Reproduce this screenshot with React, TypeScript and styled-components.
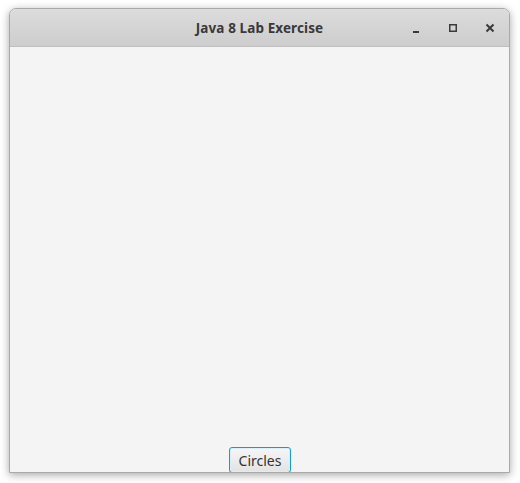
import React from 'react';
import styled, { createGlobalStyle } from 'styled-components';

const GlobalStyle = createGlobalStyle`
  html, body {
    margin: 0;
    padding: 0;
    background: #ffffff;
  }
  body {
    width: 520px;
    height: 483px;
    overflow: hidden;
  }
`;

const Page = styled.div`
  width: 520px;
  height: 483px;
  padding: 8px 10px 10px 9px;
  box-sizing: border-box;
`;

const Window = styled.div`
  width: 501px;
  height: 465px;
  display: flex;
  flex-direction: column;
  border: 1px solid #a9a9a9;
  border-radius: 7px 7px 0 0;
  box-shadow: 0 2px 8px rgba(0, 0, 0, 0.35);
  overflow: hidden;
  box-sizing: border-box;
  background: #f4f4f4;
`;

const TitleBar = styled.div`
  height: 38px;
  flex: 0 0 38px;
  display: grid;
  grid-template-columns: 1fr auto 1fr;
  align-items: center;
  background: linear-gradient(#dcdcdc, #cdcdcd);
  border-bottom: 1px solid #bfbfbf;
  box-sizing: border-box;
  font-family: 'Noto Sans', 'DejaVu Sans', sans-serif;
`;

const Title = styled.div`
  grid-column: 2;
  font-size: 13.5px;
  font-weight: bold;
  letter-spacing: 0.1px;
  color: #393939;
`;

const Controls = styled.div`
  grid-column: 3;
  justify-self: end;
  display: flex;
  align-items: center;
  gap: 19px;
  padding-right: 10px;
`;

const ControlButton = styled.div`
  width: 18px;
  height: 18px;
  display: flex;
  align-items: center;
  justify-content: center;
`;

const Content = styled.div`
  flex: 1;
  display: flex;
  flex-direction: column;
  justify-content: flex-end;
  align-items: center;
`;

const Button = styled.button`
  width: 62px;
  height: 26px;
  margin-bottom: -1px;
  margin-left: 1px;
  padding: 0;
  border: 1px solid #0b9fd8;
  border-radius: 3px;
  background: linear-gradient(#f6f6f6, #e3e3e3);
  box-shadow: inset 0 0 0 1px #d8eef8;
  font-family: 'Noto Sans', 'DejaVu Sans', sans-serif;
  font-size: 14px;
  color: #333333;
  cursor: pointer;
`;

const App: React.FC = () => {
  return (
    <Page>
      <GlobalStyle />
      <Window>
        <TitleBar>
          <Title>Java 8 Lab Exercise</Title>
          <Controls>
            <ControlButton>
              <svg width="18" height="18" viewBox="0 0 18 18">
                <rect x="6" y="12" width="6" height="2" fill="#3a3a3a" />
              </svg>
            </ControlButton>
            <ControlButton>
              <svg width="18" height="18" viewBox="0 0 18 18">
                <rect x="5.75" y="5.75" width="6.5" height="6.5" fill="none" stroke="#3a3a3a" strokeWidth="1.5" />
              </svg>
            </ControlButton>
            <ControlButton>
              <svg width="18" height="18" viewBox="0 0 18 18">
                <path d="M5.5 5.5 L12.5 12.5 M12.5 5.5 L5.5 12.5" stroke="#3a3a3a" strokeWidth="2" />
              </svg>
            </ControlButton>
          </Controls>
        </TitleBar>
        <Content>
          <Button>Circles</Button>
        </Content>
      </Window>
    </Page>
  );
};

export default App;
